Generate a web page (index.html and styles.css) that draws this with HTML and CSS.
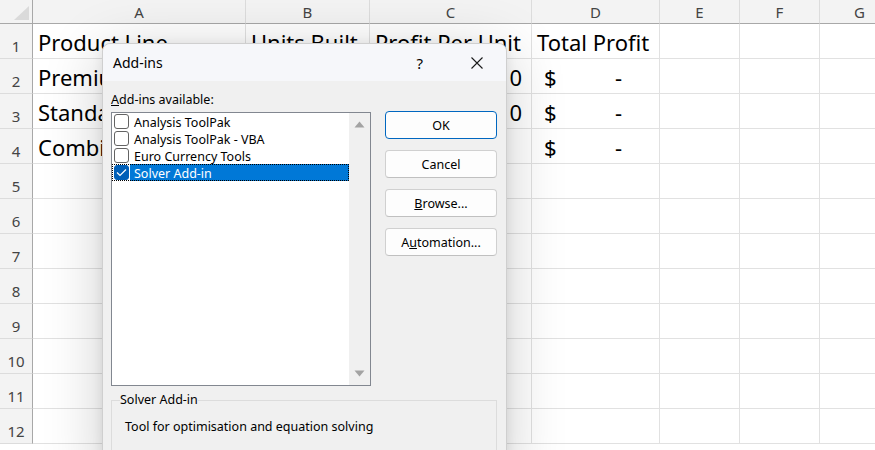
FILE: index.html
```html
<!DOCTYPE html>
<html lang="en">
<head>
<meta charset="UTF-8">
<meta name="viewport" content="width=device-width, initial-scale=1.0">
<title>Add-ins</title>
<link rel="stylesheet" href="styles.css">
</head>
<body>

<div class="sheet">
  <div class="row head-row">
    <div class="corner"><span class="corner-tri"></span></div>
    <div class="col-head">A</div>
    <div class="col-head">B</div>
    <div class="col-head">C</div>
    <div class="col-head">D</div>
    <div class="col-head">E</div>
    <div class="col-head">F</div>
    <div class="col-head">G</div>
  </div>
  <div class="row">
    <div class="row-head">1</div>
    <div class="cell">Product Line</div>
    <div class="cell">Units Built</div>
    <div class="cell">Profit Per Unit</div>
    <div class="cell">Total Profit</div>
    <div class="cell"></div><div class="cell"></div><div class="cell"></div>
  </div>
  <div class="row">
    <div class="row-head">2</div>
    <div class="cell">Premium</div>
    <div class="cell"></div>
    <div class="cell num">0</div>
    <div class="cell money"><span>$</span><span>-</span></div>
    <div class="cell"></div><div class="cell"></div><div class="cell"></div>
  </div>
  <div class="row">
    <div class="row-head">3</div>
    <div class="cell">Standard</div>
    <div class="cell"></div>
    <div class="cell num">0</div>
    <div class="cell money"><span>$</span><span>-</span></div>
    <div class="cell"></div><div class="cell"></div><div class="cell"></div>
  </div>
  <div class="row">
    <div class="row-head">4</div>
    <div class="cell">Combined</div>
    <div class="cell"></div>
    <div class="cell"></div>
    <div class="cell money"><span>$</span><span>-</span></div>
    <div class="cell"></div><div class="cell"></div><div class="cell"></div>
  </div>
  <div id="empty-rows"></div>
</div>

<div class="dialog">
  <div class="titlebar">
    <span class="title">Add-ins</span>
    <span class="help">?</span>
    <svg class="close" width="12" height="12" viewBox="0 0 12 12">
      <path d="M0.5 0.5 L11.5 11.5 M11.5 0.5 L0.5 11.5" stroke="#1a1a1a" stroke-width="1.1" fill="none"/>
    </svg>
  </div>
  <div class="dialog-body">
    <div class="left">
      <div class="label"><u>A</u>dd-ins available:</div>
      <div class="listbox">
        <div class="items">
          <div class="item"><span class="check"></span><span class="name">Analysis ToolPak</span></div>
          <div class="item"><span class="check"></span><span class="name">Analysis ToolPak - VBA</span></div>
          <div class="item"><span class="check"></span><span class="name">Euro Currency Tools</span></div>
          <div class="item selected">
            <span class="check checked">
              <svg width="11" height="9" viewBox="0 0 11 9"><path d="M1 4.5 L4 7.5 L10 1.5" stroke="#fff" stroke-width="1.2" fill="none"/></svg>
            </span>
            <span class="name">Solver Add-in</span>
          </div>
        </div>
        <div class="scrollbar">
          <svg width="11" height="7" viewBox="0 0 11 7"><path d="M5.5 0.5 L10.5 6.5 L0.5 6.5 Z" fill="#a3a3a3"/></svg>
          <svg width="11" height="7" viewBox="0 0 11 7"><path d="M0.5 0.5 L10.5 0.5 L5.5 6.5 Z" fill="#a3a3a3"/></svg>
        </div>
      </div>
    </div>
    <div class="buttons">
      <button class="btn default">OK</button>
      <button class="btn">Cancel</button>
      <button class="btn"><u>B</u>rowse...</button>
      <button class="btn">A<u>u</u>tomation...</button>
    </div>
  </div>
  <fieldset class="group">
    <legend>Solver Add-in</legend>
    <p class="desc">Tool for optimisation and equation solving</p>
  </fieldset>
</div>

<script>
  // rows 5 to 12 are empty
  const holder = document.getElementById('empty-rows');
  for (let r = 5; r <= 12; r++) {
    const row = document.createElement('div');
    row.className = 'row';
    row.innerHTML = '<div class="row-head">' + r + '</div>' + '<div class="cell"></div>'.repeat(7);
    holder.appendChild(row);
  }
</script>

</body>
</html>
```

FILE: styles.css
```css
body {
  margin: 0;
  background-color: #fff;
  font-family: "Noto Sans", sans-serif;
  overflow: hidden;
  width: 875px;
  height: 450px;
  position: relative;
}

.sheet {
  width: 875px;
}

.row {
  display: grid;
  grid-template-columns: 33px 213px 124px 162px 128px 80px 80px 80px;
  height: 35px;
}

.head-row {
  height: 24px;
}

.corner {
  background-color: #f3f3f3;
  border-right: 1px solid #a8a8a8;
  border-bottom: 1px solid #a8a8a8;
  box-sizing: border-box;
  position: relative;
}

.corner-tri {
  position: absolute;
  right: 3px;
  bottom: 3px;
  width: 0;
  height: 0;
  border-left: 15px solid transparent;
  border-bottom: 14px solid #dadada;
}

.col-head {
  background-color: #f3f3f3;
  border-right: 1px solid #dcdcdc;
  border-bottom: 1px solid #a8a8a8;
  box-sizing: border-box;
  color: #444;
  font-size: 15px;
  display: flex;
  justify-content: center;
  align-items: center;
}

.row-head {
  background-color: #f3f3f3;
  border-right: 1px solid #a8a8a8;
  border-bottom: 1px solid #dcdcdc;
  box-sizing: border-box;
  color: #444;
  font-size: 15px;
  display: flex;
  justify-content: center;
  align-items: center;
  padding-top: 9px;
}

.cell {
  border-right: 1px solid #e1e1e1;
  border-bottom: 1px solid #e1e1e1;
  box-sizing: border-box;
  font-size: 22px;
  color: #000;
  display: flex;
  align-items: center;
  padding-left: 5px;
  padding-top: 2px;
  white-space: nowrap;
  overflow: hidden;
}

.cell.num {
  justify-content: flex-end;
  padding-right: 9px;
}

.cell.money {
  justify-content: space-between;
  padding-left: 12px;
  padding-right: 37px;
}

/* dialog */

.dialog {
  position: absolute;
  left: 102px;
  top: 43px;
  width: 405px;
  height: 440px;
  box-sizing: border-box;
  background-color: #f0f0f0;
  border: 1px solid #cfcfcf;
  border-radius: 8px 8px 0 0;
  box-shadow: 0 10px 60px rgba(0, 0, 0, 0.2), 0 2px 12px rgba(0, 0, 0, 0.08);
  font-size: 12.5px;
  color: #000;
}

.titlebar {
  height: 37px;
  background-color: #f6f7fa;
  border-radius: 8px 8px 0 0;
  display: flex;
  align-items: center;
  padding-left: 10px;
}

.title {
  font-size: 14px;
  flex: 1;
}

.help {
  font-size: 15px;
  margin-right: 48px;
}

.close {
  margin-right: 23px;
}

.dialog-body {
  display: flex;
  gap: 14px;
  padding: 0 9px 0 8px;
}

.left {
  width: 260px;
  padding-top: 11px;
}

.label {
  line-height: 16px;
  margin-bottom: 4px;
}

.listbox {
  display: flex;
  height: 274px;
  box-sizing: border-box;
  border: 1px solid #828790;
  background-color: #fff;
}

.items {
  flex: 1;
}

.item {
  display: flex;
  align-items: center;
  height: 17px;
  box-sizing: border-box;
}

.check {
  width: 15px;
  height: 15px;
  box-sizing: border-box;
  border: 1px solid #636363;
  border-radius: 3px;
  margin: 0 1px 0 2px;
  background-color: #fff;
  display: flex;
  justify-content: center;
  align-items: center;
}

.check.checked {
  background-color: #005fb8;
  border-color: #005fb8;
}

.name {
  flex: 1;
  height: 17px;
  box-sizing: border-box;
  line-height: 17px;
  padding: 1px 0 0 4px;
  white-space: nowrap;
}

.item.selected {
  outline: 1px dotted #000;
  outline-offset: -1px;
}

.item.selected .name {
  background-color: #0078d7;
  color: #fff;
}

.scrollbar {
  width: 21px;
  background-color: #f0f0f0;
  display: flex;
  flex-direction: column;
  justify-content: space-between;
  align-items: center;
  padding: 8px 0 8px;
}

.buttons {
  width: 112px;
  padding-top: 30px;
  display: flex;
  flex-direction: column;
  gap: 11px;
}

.btn {
  height: 28px;
  font-family: "Noto Sans", sans-serif;
  font-size: 12.5px;
  color: #000;
  background-color: #fdfdfd;
  border: 1px solid #d0d0d0;
  border-bottom-color: #c0c0c0;
  border-radius: 4px;
  padding: 1px 0 0;
}

.btn.default {
  border: 1px solid #0067c0;
}

.group {
  margin: 6px 9px 0 8px;
  padding: 11px 13px 10px;
  border: 1px solid #dcdcdc;
  height: 60px;
}

.group legend {
  margin-left: -5px;
  padding: 0;
  line-height: 16px;
}

.desc {
  margin: 0;
  line-height: 16px;
}
```
